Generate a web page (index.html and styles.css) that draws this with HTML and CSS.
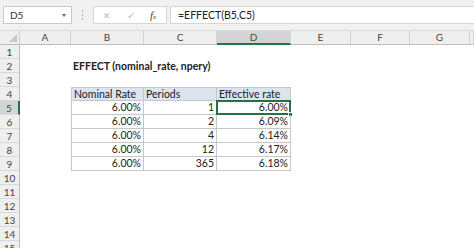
FILE: index.html
```html
<!DOCTYPE html>
<html>
<head>
<meta charset="utf-8">
<link rel="stylesheet" href="styles.css">
</head>
<body>
<div class="app">
  <div class="toolbar">
    <div class="namebox"><span>D5</span><span class="caret"></span></div>
    <div class="grip"><i></i><i></i><i></i></div>
    <div class="fbtns">
      <span class="fb-x">✕</span>
      <span class="fb-ok">✓</span>
      <span class="fb-fx">f<small>x</small></span>
    </div>
    <div class="formula">=EFFECT(B5,C5)</div>
  </div>
  <div class="sheet">
    <div class="corner"><span class="tri"></span></div>
    <div class="ch">A</div><div class="ch">B</div><div class="ch">C</div><div class="ch sel">D</div><div class="ch">E</div><div class="ch">F</div><div class="ch">G</div><div class="ch last"></div>

    <div class="rh">1</div><div class="c"></div><div class="c"></div><div class="c"></div><div class="c"></div><div class="c"></div><div class="c"></div><div class="c"></div><div class="c"></div>

    <div class="rh">2</div><div class="c"></div><div class="c title">EFFECT (nominal_rate, npery)</div><div class="c"></div><div class="c"></div><div class="c"></div><div class="c"></div><div class="c"></div><div class="c"></div>

    <div class="rh">3</div><div class="c"></div><div class="c"></div><div class="c"></div><div class="c"></div><div class="c"></div><div class="c"></div><div class="c"></div><div class="c"></div>

    <div class="rh">4</div><div class="c"></div><div class="c t th tl">Nominal Rate</div><div class="c t th">Periods</div><div class="c t th">Effective rate</div><div class="c"></div><div class="c"></div><div class="c"></div><div class="c"></div>

    <div class="rh rsel">5</div><div class="c"></div><div class="c t tl num">6.00%</div><div class="c t num">1</div><div class="c t num active">6.00%<span class="handle"></span></div><div class="c"></div><div class="c"></div><div class="c"></div><div class="c"></div>

    <div class="rh">6</div><div class="c"></div><div class="c t tl num">6.00%</div><div class="c t num">2</div><div class="c t num">6.09%</div><div class="c"></div><div class="c"></div><div class="c"></div><div class="c"></div>

    <div class="rh">7</div><div class="c"></div><div class="c t tl num">6.00%</div><div class="c t num">4</div><div class="c t num">6.14%</div><div class="c"></div><div class="c"></div><div class="c"></div><div class="c"></div>

    <div class="rh">8</div><div class="c"></div><div class="c t tl num">6.00%</div><div class="c t num">12</div><div class="c t num">6.17%</div><div class="c"></div><div class="c"></div><div class="c"></div><div class="c"></div>

    <div class="rh">9</div><div class="c"></div><div class="c t tl num">6.00%</div><div class="c t num">365</div><div class="c t num">6.18%</div><div class="c"></div><div class="c"></div><div class="c"></div><div class="c"></div>

    <div class="rh">10</div><div class="c"></div><div class="c"></div><div class="c"></div><div class="c"></div><div class="c"></div><div class="c"></div><div class="c"></div><div class="c"></div>
    <div class="rh">11</div><div class="c"></div><div class="c"></div><div class="c"></div><div class="c"></div><div class="c"></div><div class="c"></div><div class="c"></div><div class="c"></div>
    <div class="rh">12</div><div class="c"></div><div class="c"></div><div class="c"></div><div class="c"></div><div class="c"></div><div class="c"></div><div class="c"></div><div class="c"></div>
    <div class="rh">13</div><div class="c"></div><div class="c"></div><div class="c"></div><div class="c"></div><div class="c"></div><div class="c"></div><div class="c"></div><div class="c"></div>
    <div class="rh">14</div><div class="c"></div><div class="c"></div><div class="c"></div><div class="c"></div><div class="c"></div><div class="c"></div><div class="c"></div><div class="c"></div>
    <div class="rh">15</div><div class="c"></div><div class="c"></div><div class="c"></div><div class="c"></div><div class="c"></div><div class="c"></div><div class="c"></div><div class="c"></div>
  </div>
</div>
</body>
</html>
```

FILE: styles.css
```css
* { box-sizing: border-box; }
html, body { margin: 0; padding: 0; background: #fff; }
.app {
  width: 474px; height: 248px; overflow: hidden;
  font-family: "Lato", "Liberation Sans", sans-serif;
  color: #222;
}
.toolbar {
  height: 31px;
  background: #f1f1f1;
  display: flex;
  align-items: flex-start;
  padding-top: 6px;
  padding-left: 3px;
  border-bottom: 1px solid #dadada;
}
.namebox {
  width: 69px; height: 18px;
  background: #fff;
  border: 1px solid #c9c9c9;
  display: flex; align-items: center; justify-content: space-between;
  padding: 0 5px 0 6px;
  font-size: 10px; color: #333;
}
.caret {
  width: 0; height: 0;
  border-left: 2.5px solid transparent;
  border-right: 2.5px solid transparent;
  border-top: 3px solid #666;
}
.grip {
  width: 21px; height: 18px;
  display: flex; flex-direction: column; align-items: center; justify-content: center; gap: 2px;
}
.grip i { display: block; width: 1px; height: 2px; background: #b5b5b5; }
.fbtns {
  width: 74px; height: 18px;
  background: #fff;
  border: 1px solid #d6d6d6;
  display: flex; align-items: center;
  padding-left: 9px;
  gap: 0;
}
.fb-x { width: 24px; color: #b8b8b8; font-size: 9px; }
.fb-ok { width: 23px; color: #b8b8b8; font-size: 10px; }
.fb-fx { font-family: "Liberation Serif", serif; font-style: italic; font-size: 11px; color: #444; }
.fb-fx small { font-size: 7px; }
.formula {
  margin-left: 3px;
  flex: 1; height: 18px;
  background: #fff;
  border: 1px solid #d6d6d6;
  border-right: none;
  padding-left: 7px;
  font-size: 10.5px; line-height: 16px; color: #222;
}
.sheet {
  display: grid;
  grid-template-columns: 20px 51px 73px 73px 74px 60px 59px 60px 4px;
  grid-template-rows: 14px repeat(15, 14px);
}
.corner {
  background: #efefef;
  border-right: 1px solid #cfcfcf;
  border-bottom: 1px solid #bdbdbd;
  position: relative;
}
.tri {
  position: absolute; right: 2px; bottom: 2px;
  width: 0; height: 0;
  border-left: 8px solid transparent;
  border-bottom: 8px solid #c6c6c6;
}
.ch {
  background: #efefef;
  border-right: 1px solid #d3d3d3;
  border-bottom: 1px solid #bdbdbd;
  font-size: 10px; color: #444;
  text-align: center; line-height: 13px;
}
.ch.sel {
  background: #d4d4d4;
  border-bottom: 2px solid #217346;
  color: #2a5e3f;
}
.rh {
  background: #efefef;
  border-right: 1px solid #bdbdbd;
  border-bottom: 1px solid #d9d9d9;
  font-size: 10px; color: #444;
  text-align: center; line-height: 15px;
}
.rh.rsel {
  background: #d4d4d4;
  border-right: 2px solid #217346;
  color: #2a5e3f;
}
.c {
  font-size: 10.5px; line-height: 14px;
  white-space: nowrap;
  padding: 0 2px;
  position: relative;
}
.title { font-weight: 700; overflow: visible; }
.t {
  border-right: 1px solid #c6c6c6;
  border-bottom: 1px solid #c6c6c6;
  line-height: 13px;
}
.tl { border-left: 1px solid #c6c6c6; }
.th { background: #dce4ef; border-top: 1px solid #c6c6c6; line-height: 12px; }
.num { text-align: right; }
.active {
  border: 2px solid #217346;
  margin-top: -1px; margin-left: -1px;
  line-height: 11px;
  padding-right: 1px;
}
.handle {
  position: absolute; right: -4px; bottom: -4px;
  width: 5px; height: 5px;
  background: #217346;
  border: 1px solid #fff;
}
```
